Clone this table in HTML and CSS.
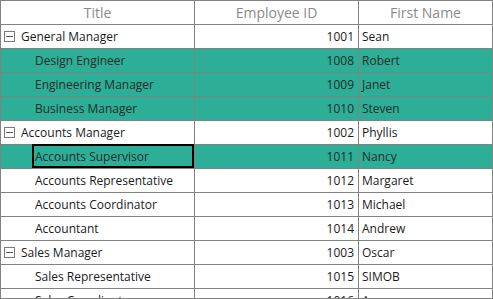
FILE: index.html
```html
<!DOCTYPE html>
<html>
<head>
<meta charset="utf-8">
<link rel="stylesheet" href="styles.css">
</head>
<body>
<div class="grid">
  <div class="row head">
    <div class="cell c1 hcell">Title</div>
    <div class="cell c2 hcell">Employee ID</div>
    <div class="cell c3 hcell">First Name</div>
  </div>
  <div class="row">
    <div class="cell c1"><span class="exp"></span><span class="t0">General Manager</span></div>
    <div class="cell c2 num">1001</div>
    <div class="cell c3">Sean</div>
  </div>
  <div class="row sel">
    <div class="cell c1"><span class="ind"></span><span class="t1">Design Engineer</span></div>
    <div class="cell c2 num">1008</div>
    <div class="cell c3">Robert</div>
  </div>
  <div class="row sel">
    <div class="cell c1"><span class="ind"></span><span class="t1">Engineering Manager</span></div>
    <div class="cell c2 num">1009</div>
    <div class="cell c3">Janet</div>
  </div>
  <div class="row sel">
    <div class="cell c1"><span class="ind"></span><span class="t1">Business Manager</span></div>
    <div class="cell c2 num">1010</div>
    <div class="cell c3">Steven</div>
  </div>
  <div class="row">
    <div class="cell c1"><span class="exp"></span><span class="t0">Accounts Manager</span></div>
    <div class="cell c2 num">1002</div>
    <div class="cell c3">Phyllis</div>
  </div>
  <div class="row sel">
    <div class="cell c1"><span class="ind"></span><span class="t1 cur">Accounts Supervisor</span></div>
    <div class="cell c2 num">1011</div>
    <div class="cell c3">Nancy</div>
  </div>
  <div class="row">
    <div class="cell c1"><span class="ind"></span><span class="t1">Accounts Representative</span></div>
    <div class="cell c2 num">1012</div>
    <div class="cell c3">Margaret</div>
  </div>
  <div class="row">
    <div class="cell c1"><span class="ind"></span><span class="t1">Accounts Coordinator</span></div>
    <div class="cell c2 num">1013</div>
    <div class="cell c3">Michael</div>
  </div>
  <div class="row">
    <div class="cell c1"><span class="ind"></span><span class="t1">Accountant</span></div>
    <div class="cell c2 num">1014</div>
    <div class="cell c3">Andrew</div>
  </div>
  <div class="row">
    <div class="cell c1"><span class="exp"></span><span class="t0">Sales Manager</span></div>
    <div class="cell c2 num">1003</div>
    <div class="cell c3">Oscar</div>
  </div>
  <div class="row">
    <div class="cell c1"><span class="ind"></span><span class="t1">Sales Representative</span></div>
    <div class="cell c2 num">1015</div>
    <div class="cell c3">SIMOB</div>
  </div>
  <div class="row">
    <div class="cell c1"><span class="ind"></span><span class="t1">Sales Coordinator</span></div>
    <div class="cell c2 num">1016</div>
    <div class="cell c3">Anne</div>
  </div>
</div>
</body>
</html>
```
FILE: styles.css
```css
html, body { margin: 0; padding: 0; background: #fff; }
.grid {
  width: 493px;
  height: 299px;
  box-sizing: border-box;
  border: 1px solid #828282;
  overflow: hidden;
  font-family: "Open Sans", "Noto Sans", sans-serif;
  font-size: 12px;
  color: #1a1a1a;
}
.row {
  display: grid;
  grid-template-columns: 194px 164px 133px;
  height: 24px;
}
.cell {
  box-sizing: border-box;
  height: 24px;
  border-bottom: 1px solid #828282;
  border-right: 1px solid #828282;
  display: flex;
  align-items: center;
  white-space: nowrap;
  overflow: visible;
  min-width: 0;
}
.c3 { border-right: none; padding-left: 3px; }
.num { justify-content: flex-end; padding-right: 4px; }
.hcell {
  justify-content: center;
  padding: 0;
  font-size: 14px;
  color: #8a8a8a;
}
.sel { background: #2cae97; }
.sel .cell { color: #2a2a2a; }
.exp {
  box-sizing: border-box;
  width: 11px;
  height: 11px;
  border: 1px solid #7a7a7a;
  margin-left: 3px;
  margin-right: 6px;
  position: relative;
  flex: none;
}
.exp::after {
  content: "";
  position: absolute;
  left: 1px;
  right: 1px;
  top: 4px;
  height: 1px;
  background: #555;
}
.ind { width: 31px; flex: none; }
.t1 {
  flex: 1;
  align-self: stretch;
  display: flex;
  align-items: center;
  padding-left: 3px;
  box-sizing: border-box;
}
.cur {
  border: 2px solid #000;
  border-left-width: 2px;
  padding-left: 1px;
  margin-top: -1px;
  height: 24px;
  margin-right: 0;
}
```
